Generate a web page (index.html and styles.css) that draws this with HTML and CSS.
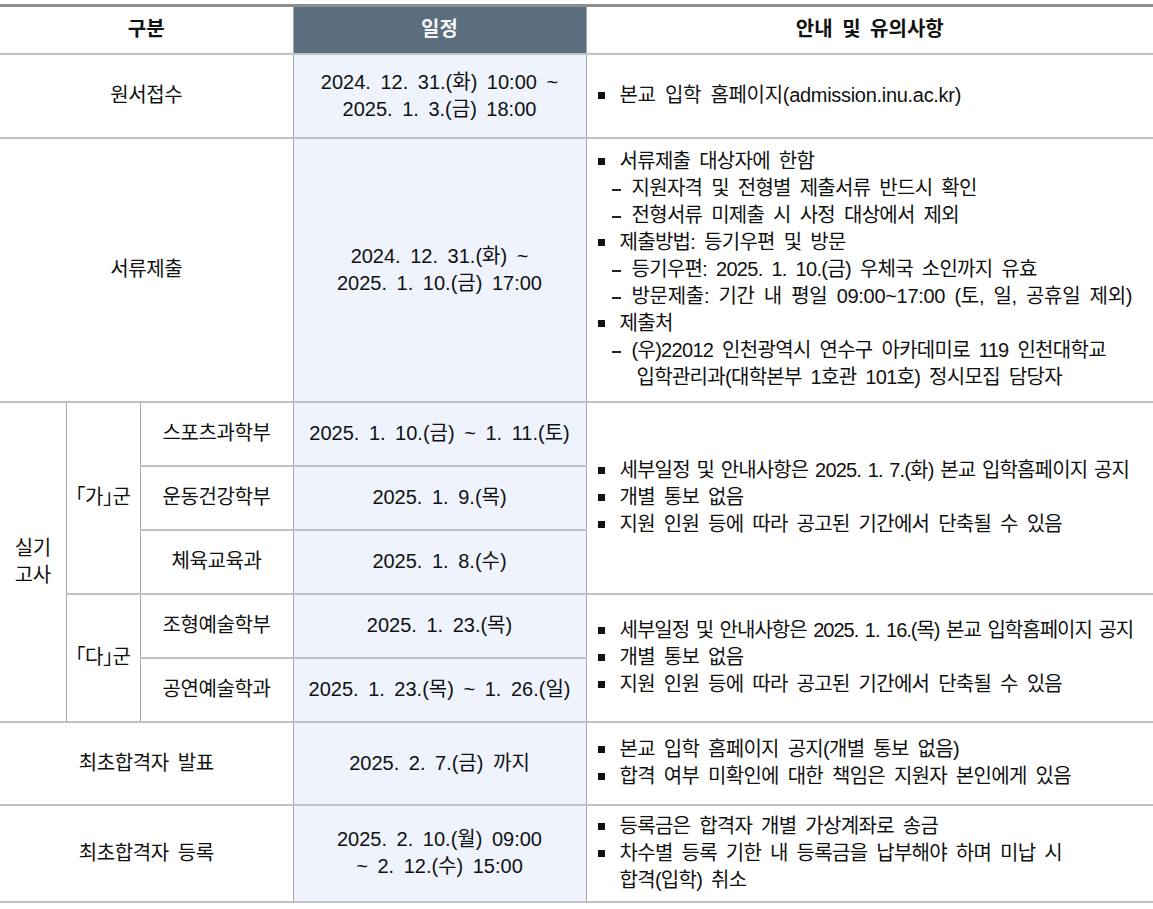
FILE: index.html
```html
<!DOCTYPE html>
<html lang="ko">
<head>
<meta charset="utf-8">
<title>정시모집 일정</title>
<link rel="stylesheet" href="styles.css">
</head>
<body>
<table class="sched">
  <colgroup>
    <col class="c1"><col class="c2"><col class="c3"><col class="c4"><col class="c5">
  </colgroup>
  <thead>
    <tr class="r-head">
      <th colspan="3">구분</th>
      <th class="sch-head">일정</th>
      <th>안내 및 유의사항</th>
    </tr>
  </thead>
  <tbody>
    <tr class="r-apply">
      <td colspan="3" class="lbl">원서접수</td>
      <td class="sch">2024. 12. 31.(화) 10:00 ~<br>2025. 1. 3.(금) 18:00</td>
      <td class="note">
        <ul class="list">
          <li class="sq loose">본교 입학 홈페이지(admission.inu.ac.kr)</li>
        </ul>
      </td>
    </tr>
    <tr class="r-docs">
      <td colspan="3" class="lbl">서류제출</td>
      <td class="sch">2024. 12. 31.(화) ~<br>2025. 1. 10.(금) 17:00</td>
      <td class="note">
        <ul class="list">
          <li class="sq">서류제출 대상자에 한함</li>
          <li class="dash">지원자격 및 전형별 제출서류 반드시 확인</li>
          <li class="dash">전형서류 미제출 시 사정 대상에서 제외</li>
          <li class="sq">제출방법: 등기우편 및 방문</li>
          <li class="dash">등기우편: 2025. 1. 10.(금) 우체국 소인까지 유효</li>
          <li class="dash loose">방문제출: 기간 내 평일 09:00~17:00 (토, 일, 공휴일 제외)</li>
          <li class="sq">제출처</li>
          <li class="dash">(우)22012 인천광역시 연수구 아카데미로 119 인천대학교<br><span class="cont">입학관리과(대학본부 1호관 101호) 정시모집 담당자</span></li>
        </ul>
      </td>
    </tr>
    <tr class="r-sub">
      <td rowspan="5" class="g1 lbl">실기<br>고사</td>
      <td rowspan="3" class="g2 lbl">｢가｣군</td>
      <td class="lbl">스포츠과학부</td>
      <td class="sch">2025. 1. 10.(금) ~ 1. 11.(토)</td>
      <td rowspan="3" class="note">
        <ul class="list">
          <li class="sq tight">세부일정 및 안내사항은 2025. 1. 7.(화) 본교 입학홈페이지 공지</li>
          <li class="sq">개별 통보 없음</li>
          <li class="sq">지원 인원 등에 따라 공고된 기간에서 단축될 수 있음</li>
        </ul>
      </td>
    </tr>
    <tr class="r-sub thin">
      <td class="lbl">운동건강학부</td>
      <td class="sch">2025. 1. 9.(목)</td>
    </tr>
    <tr class="r-sub thin">
      <td class="lbl">체육교육과</td>
      <td class="sch">2025. 1. 8.(수)</td>
    </tr>
    <tr class="r-sub">
      <td rowspan="2" class="g2 lbl">｢다｣군</td>
      <td class="lbl">조형예술학부</td>
      <td class="sch">2025. 1. 23.(목)</td>
      <td rowspan="2" class="note">
        <ul class="list">
          <li class="sq tighter">세부일정 및 안내사항은 2025. 1. 16.(목) 본교 입학홈페이지 공지</li>
          <li class="sq">개별 통보 없음</li>
          <li class="sq">지원 인원 등에 따라 공고된 기간에서 단축될 수 있음</li>
        </ul>
      </td>
    </tr>
    <tr class="r-sub thin">
      <td class="lbl">공연예술학과</td>
      <td class="sch">2025. 1. 23.(목) ~ 1. 26.(일)</td>
    </tr>
    <tr class="r-announce">
      <td colspan="3" class="lbl">최초합격자 발표</td>
      <td class="sch">2025. 2. 7.(금) 까지</td>
      <td class="note">
        <ul class="list">
          <li class="sq">본교 입학 홈페이지 공지(개별 통보 없음)</li>
          <li class="sq">합격 여부 미확인에 대한 책임은 지원자 본인에게 있음</li>
        </ul>
      </td>
    </tr>
    <tr class="r-register">
      <td colspan="3" class="lbl">최초합격자 등록</td>
      <td class="sch">2025. 2. 10.(월) 09:00<br>~ 2. 12.(수) 15:00</td>
      <td class="note">
        <ul class="list">
          <li class="sq">등록금은 합격자 개별 가상계좌로 송금</li>
          <li class="sq">차수별 등록 기한 내 등록금을 납부해야 하며 미납 시<br>합격(입학) 취소</li>
        </ul>
      </td>
    </tr>
  </tbody>
</table>
</body>
</html>
```

FILE: styles.css
```css
html, body {
  margin: 0;
  padding: 0;
  background: #ffffff;
}

body {
  padding-top: 4px;
  font-family: "Liberation Sans", "Noto Sans CJK KR", sans-serif;
  font-size: 20px;
  color: #111111;
}

.sched {
  width: 1153px;
  border-collapse: collapse;
  table-layout: fixed;
  border-top: 3px solid #8e8e8e;
  border-bottom: 2px solid #b8b8b8;
}

.c1 { width: 66px; }
.c2 { width: 74px; }
.c3 { width: 153px; }
.c4 { width: 293px; }
.c5 { width: 567px; }

.sched th,
.sched td {
  padding: 0;
  text-align: center;
  vertical-align: middle;
  line-height: 27px;
  letter-spacing: 0;
  word-spacing: 4px;
  white-space: nowrap;
  border-top: 2px solid #c2c2c2;
  border-bottom: 2px solid #c2c2c2;
  border-left: 1px solid #a8a8a8;
  border-right: 1px solid #a8a8a8;
}

.sched tr > :first-child { border-left: none; }
.sched tr > :last-child { border-right: none; }
.sched td.g1 { border-left: none; }
.sched td.g2 { border-left: 1px solid #a8a8a8; }

.sched tr.thin > td { border-top: 1px solid #a8a8a8; }

.sched th {
  font-weight: bold;
  border-top: none;
}

.sched th.sch-head {
  background: #5a6e7e;
  color: #f4f6f8;
}

.r-head { height: 48px; }
.r-apply { height: 84px; }
.r-docs { height: 264px; }
.r-sub { height: 64px; }
.r-announce { height: 83px; }
.r-register { height: 97px; }

.sched td.lbl {
  letter-spacing: -0.4px;
}

.sched td.sch {
  background: #eef3fd;
}

.sched td.note {
  text-align: left;
  letter-spacing: -0.7px;
}

.list {
  list-style: none;
  margin: 0;
  padding: 0 0 0 33px;
}

.list li {
  position: relative;
}

.list li.tight {
  letter-spacing: -0.85px;
  word-spacing: 2px;
}

.list li.tighter {
  letter-spacing: -1px;
  word-spacing: 2px;
}

.list li.loose {
  letter-spacing: -0.3px;
}

.list li.sq::before {
  content: "";
  position: absolute;
  left: -22px;
  top: 10px;
  width: 7px;
  height: 7px;
  background: #111111;
}

.list li.dash {
  padding-left: 12px;
}

.list li.dash::before {
  content: "";
  position: absolute;
  left: -8px;
  top: 14px;
  width: 9px;
  height: 2px;
  background: #222222;
}

.cont {
  padding-left: 5px;
}
```
